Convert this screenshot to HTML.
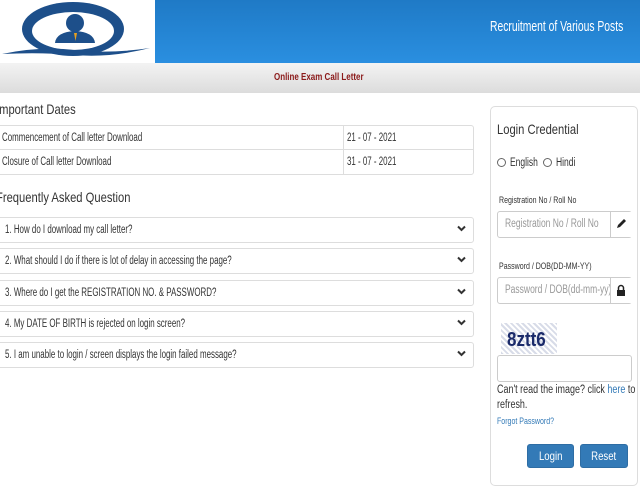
<!DOCTYPE html>
<html><head><meta charset="utf-8"><style>
*{box-sizing:border-box;margin:0;padding:0}
body{width:640px;height:480px;overflow:hidden;background:#fff;font-family:"Liberation Sans",sans-serif;color:#333;position:relative}
.a{position:absolute;white-space:nowrap}
.n{display:inline-block;transform:scaleX(.74);transform-origin:0 50%;white-space:nowrap}
.m{transform:scaleX(.69)}
.hdr{left:155px;top:0;width:485px;height:63px;background:linear-gradient(#1f7ac6,#2a8fe0)}
.bar{left:0;top:63px;width:640px;height:30px;background:linear-gradient(#f3f3f3,#dcdcdc)}
.box{border:1px solid #ddd;border-radius:3px}
.faq{left:-4px;width:478px;height:26px;font-size:11.5px;line-height:24px;padding-left:8px}
.chev{position:absolute;right:7px;top:7px}
.inp{border:1px solid #ccc;border-radius:3px;background:#fff}
.btn{background:#337ab7;border:1px solid #2e6da4;border-radius:3px;color:#fff;font-size:12px;text-align:center;line-height:22px;height:24px}
.rad{display:inline-block;width:9px;height:9px;border:1px solid #666;border-radius:50%;vertical-align:-1px;margin-right:4px}
</style></head><body>
<svg class="a" style="left:0;top:0" width="155" height="63" viewBox="0 0 155 63">
<ellipse cx="73" cy="29" rx="51" ry="27" fill="#1d4f8a"/>
<ellipse cx="73" cy="31" rx="41" ry="19" fill="#fff"/>
<circle cx="75" cy="23" r="9" fill="#1d4f8a"/>
<path d="M55 43 Q56 32 75 31 Q94 32 95 43 Z" fill="#1d4f8a"/>
<path d="M74 33 L77 33 L75.5 41 Z" fill="#e6a020"/>
<path d="M2 54 Q40 46 75 50 Q110 54 150 48 Q110 58 75 55 Q40 52 2 54 Z" fill="#1d4f8a"/>
</svg>
<div class="a hdr"></div>
<div class="a" style="left:490px;top:18px;color:#fff;font-size:15px"><span class="n" style="transform:scaleX(.69)">Recruitment of Various Posts</span></div>
<div class="a bar"></div>
<div class="a" style="left:274px;top:71px;color:#8b1a1a;font-size:10.5px;font-weight:bold"><span class="n" style="transform:scaleX(.76)">Online Exam Call Letter</span></div>
<div class="a" style="left:-4px;top:101px;font-size:14px"><span class="n" style="transform:scaleX(.8)">Important Dates</span></div>
<div class="a box" style="left:-4px;top:125px;width:478px;height:50px;font-size:11.5px">
<div style="height:24px;border-bottom:1px solid #ddd;line-height:24px;padding-left:5px;position:relative"><span class="n m">Commencement of Call letter Download</span><span style="position:absolute;left:346px;top:0;height:24px;border-left:1px solid #ddd;padding-left:3px"><span class="n m">21 - 07 - 2021</span></span></div>
<div style="height:24px;line-height:24px;padding-left:5px;position:relative"><span class="n m">Closure of Call letter Download</span><span style="position:absolute;left:346px;top:0;height:24px;border-left:1px solid #ddd;padding-left:3px"><span class="n m">31 - 07 - 2021</span></span></div>
</div>
<div class="a" style="left:-4px;top:189px;font-size:14px"><span class="n" style="transform:scaleX(.8)">Frequently Asked Question</span></div>
<div class="a box faq" style="top:217px"><span class="n m">1. How do I download my call letter?</span><svg class="chev" width="9" height="7"><path d="M1 1.5 L4.5 5 L8 1.5" stroke="#333" stroke-width="2" fill="none"/></svg></div>
<div class="a box faq" style="top:248px"><span class="n m">2. What should I do if there is lot of delay in accessing the page?</span><svg class="chev" width="9" height="7"><path d="M1 1.5 L4.5 5 L8 1.5" stroke="#333" stroke-width="2" fill="none"/></svg></div>
<div class="a box faq" style="top:280px"><span class="n m">3. Where do I get the REGISTRATION NO. &amp; PASSWORD?</span><svg class="chev" width="9" height="7"><path d="M1 1.5 L4.5 5 L8 1.5" stroke="#333" stroke-width="2" fill="none"/></svg></div>
<div class="a box faq" style="top:311px"><span class="n m">4. My DATE OF BIRTH is rejected on login screen?</span><svg class="chev" width="9" height="7"><path d="M1 1.5 L4.5 5 L8 1.5" stroke="#333" stroke-width="2" fill="none"/></svg></div>
<div class="a box faq" style="top:342px"><span class="n m">5. I am unable to login / screen displays the login failed message?</span><svg class="chev" width="9" height="7"><path d="M1 1.5 L4.5 5 L8 1.5" stroke="#333" stroke-width="2" fill="none"/></svg></div>

<div class="a box" style="left:490px;top:106px;width:148px;height:380px;border-radius:5px"></div>
<div class="a" style="left:497px;top:121px;font-size:14px"><span class="n" style="transform:scaleX(.8)">Login Credential</span></div>
<div class="a" style="left:497px;top:157px;font-size:11.5px"><span class="rad"></span><span class="n" style="width:33px">English</span><span class="rad"></span><span class="n">Hindi</span></div>
<div class="a" style="left:499px;top:195px;font-size:9.5px"><span class="n">Registration No / Roll No</span></div>
<div class="a inp" style="left:497px;top:211px;width:135px;height:27px"><span style="position:absolute;left:7px;top:6px;font-size:11.5px;color:#999"><span class="n">Registration No / Roll No</span></span><span style="position:absolute;left:112px;top:0;width:22px;height:25px;border-left:1px solid #ccc;background:#fff"></span><svg class="a" style="left:117px;top:6px" width="12" height="12"><path d="M2 10 L3 7 L9 1 L11 3 L5 9 Z" fill="#222"/></svg></div>
<div class="a" style="left:499px;top:261px;font-size:9.5px"><span class="n">Password / DOB(DD-MM-YY)</span></div>
<div class="a inp" style="left:497px;top:277px;width:135px;height:27px"><span style="position:absolute;left:7px;top:6px;font-size:11.5px;color:#999"><span class="n">Password / DOB(dd-mm-yy)</span></span><span style="position:absolute;left:112px;top:0;width:22px;height:25px;border-left:1px solid #ccc;background:#fff"></span><svg class="a" style="left:118px;top:6px" width="10" height="13"><path d="M2.5 6 V4 a2.5 2.5 0 0 1 5 0 V6" stroke="#222" stroke-width="1.5" fill="none"/><rect x="1" y="6" width="8" height="6" fill="#222"/></svg></div>
<div class="a" style="left:501px;top:323px;width:56px;height:31px;background:repeating-linear-gradient(45deg,#d8dce8 0 2px,#fff 2px 4px);font:bold 20px 'Liberation Sans',sans-serif;color:#1a2a6a;line-height:34px;padding-left:6px"><span class="n" style="transform:scaleX(.85)">8ztt6</span></div>
<div class="a inp" style="left:497px;top:355px;width:135px;height:27px"></div>
<div class="a" style="left:497px;top:383px;font-size:11.5px;line-height:15px"><span class="n" style="transform:scaleX(.78)">Can't read the image? click <span style="color:#337ab7">here</span> to</span><br><span class="n" style="transform:scaleX(.78)">refresh.</span></div>
<div class="a" style="left:497px;top:416px;font-size:9.5px;color:#337ab7"><span class="n">Forgot Password?</span></div>
<div class="a btn" style="left:527px;top:444px;width:47px"><span class="n" style="transform:scaleX(.8);transform-origin:50% 50%">Login</span></div>
<div class="a btn" style="left:580px;top:444px;width:48px"><span class="n" style="transform:scaleX(.8);transform-origin:50% 50%">Reset</span></div>
</body></html>
